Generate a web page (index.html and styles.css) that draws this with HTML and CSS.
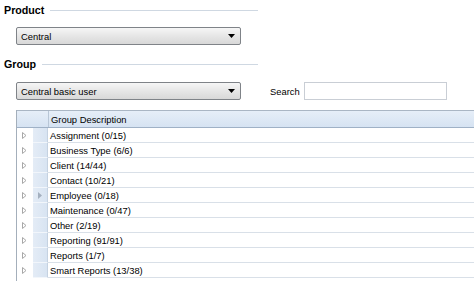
FILE: index.html
```html
<!DOCTYPE html>
<html>
<head>
<meta charset="utf-8">
<link rel="stylesheet" href="styles.css">
</head>
<body>
<div class="page">
  <div class="section-head first">
    <span class="section-label">Product</span>
    <span class="section-line"></span>
  </div>
  <div class="combo">
    <span class="combo-text">Central</span>
    <svg class="combo-arrow" width="7" height="4" viewBox="0 0 7 4"><path d="M0 0H7L3.5 4Z" fill="#000"/></svg>
  </div>

  <div class="section-head">
    <span class="section-label">Group</span>
    <span class="section-line"></span>
  </div>
  <div class="group-row">
    <div class="combo">
      <span class="combo-text">Central basic user</span>
      <svg class="combo-arrow" width="7" height="4" viewBox="0 0 7 4"><path d="M0 0H7L3.5 4Z" fill="#000"/></svg>
    </div>
    <span class="search-label">Search</span>
    <span class="search-box"></span>
  </div>

  <div class="grid">
    <div class="grid-head">
      <span class="gh-left"></span>
      <span class="gh-text">Group Description</span>
    </div>
    <div class="grid-row"><span class="exp"><svg width="5" height="7" viewBox="0 0 5 7"><path d="M0.5 0.5L4 3.5L0.5 6.5Z" fill="none" stroke="#a8a8a8"/></svg></span><span class="sel"></span><span class="cell">Assignment (0/15)</span></div>
    <div class="grid-row"><span class="exp"><svg width="5" height="7" viewBox="0 0 5 7"><path d="M0.5 0.5L4 3.5L0.5 6.5Z" fill="none" stroke="#a8a8a8"/></svg></span><span class="sel"></span><span class="cell">Business Type (6/6)</span></div>
    <div class="grid-row"><span class="exp"><svg width="5" height="7" viewBox="0 0 5 7"><path d="M0.5 0.5L4 3.5L0.5 6.5Z" fill="none" stroke="#a8a8a8"/></svg></span><span class="sel"></span><span class="cell">Client (14/44)</span></div>
    <div class="grid-row"><span class="exp"><svg width="5" height="7" viewBox="0 0 5 7"><path d="M0.5 0.5L4 3.5L0.5 6.5Z" fill="none" stroke="#a8a8a8"/></svg></span><span class="sel"></span><span class="cell">Contact (10/21)</span></div>
    <div class="grid-row"><span class="exp"><svg width="5" height="7" viewBox="0 0 5 7"><path d="M0.5 0.5L4 3.5L0.5 6.5Z" fill="none" stroke="#a8a8a8"/></svg></span><span class="sel"><svg width="4" height="7" viewBox="0 0 4 7"><path d="M0 0L4 3.5L0 7Z" fill="#a4b0bf"/></svg></span><span class="cell">Employee (0/18)</span></div>
    <div class="grid-row"><span class="exp"><svg width="5" height="7" viewBox="0 0 5 7"><path d="M0.5 0.5L4 3.5L0.5 6.5Z" fill="none" stroke="#a8a8a8"/></svg></span><span class="sel"></span><span class="cell">Maintenance (0/47)</span></div>
    <div class="grid-row"><span class="exp"><svg width="5" height="7" viewBox="0 0 5 7"><path d="M0.5 0.5L4 3.5L0.5 6.5Z" fill="none" stroke="#a8a8a8"/></svg></span><span class="sel"></span><span class="cell">Other (2/19)</span></div>
    <div class="grid-row"><span class="exp"><svg width="5" height="7" viewBox="0 0 5 7"><path d="M0.5 0.5L4 3.5L0.5 6.5Z" fill="none" stroke="#a8a8a8"/></svg></span><span class="sel"></span><span class="cell">Reporting (91/91)</span></div>
    <div class="grid-row"><span class="exp"><svg width="5" height="7" viewBox="0 0 5 7"><path d="M0.5 0.5L4 3.5L0.5 6.5Z" fill="none" stroke="#a8a8a8"/></svg></span><span class="sel"></span><span class="cell">Reports (1/7)</span></div>
    <div class="grid-row"><span class="exp"><svg width="5" height="7" viewBox="0 0 5 7"><path d="M0.5 0.5L4 3.5L0.5 6.5Z" fill="none" stroke="#a8a8a8"/></svg></span><span class="sel"></span><span class="cell">Smart Reports (13/38)</span></div>
  </div>
</div>
</body>
</html>
```

FILE: styles.css
```css
html, body {
  margin: 0;
  padding: 0;
  background: #fff;
  height: 100%;
  overflow: hidden;
}
.page {
  font-family: "Liberation Sans", Arial, sans-serif;
  font-size: 9.4px;
  color: #000;
  height: 281px;
  display: flex;
  flex-direction: column;
}
.section-head {
  display: flex;
  align-items: center;
  width: 254px;
  height: 14px;
  padding-left: 4px;
  margin-top: 12px;
}
.section-head.first {
  margin-top: 3px;
}
.section-label {
  font-weight: bold;
  font-size: 10.7px;
  color: #000;
  margin-right: 6px;
}
.section-line {
  flex: 1;
  height: 1px;
  background: #cfd8e2;
}
.combo {
  box-sizing: border-box;
  width: 225px;
  height: 18px;
  margin-left: 16px;
  margin-top: 10px;
  border: 1px solid #7f8388;
  border-radius: 2px;
  background: linear-gradient(#f6f6f6, #e6e6e6 50%, #d8d8d8);
  display: flex;
  align-items: center;
  justify-content: space-between;
  padding: 0 5px 0 4px;
}
.group-row {
  display: flex;
  align-items: center;
  margin-top: 11px;
}
.group-row .combo {
  margin-top: 0;
}
.search-label {
  margin-left: 29px;
}
.search-box {
  box-sizing: border-box;
  width: 143px;
  height: 18px;
  margin-left: 4px;
  border: 1px solid #c9ced5;
  background: #fff;
}
.grid {
  margin-top: 10px;
  margin-left: 16px;
  flex: 1;
  border-left: 1px solid #a4afbb;
}
.grid-head {
  display: flex;
  height: 16px;
  border-top: 1px solid #aab6c4;
  border-bottom: 1px solid #9fb1c6;
  background: linear-gradient(#e6eef8, #d6e3f2);
  align-items: stretch;
}
.gh-left {
  width: 31px;
  border-right: 1px solid #b8c6d6;
}
.gh-text {
  display: flex;
  align-items: center;
  padding-left: 2px;
}
.grid-row {
  display: flex;
  height: 15px;
  align-items: stretch;
}
.exp {
  width: 15px;
  display: flex;
  align-items: center;
  justify-content: center;
  padding-right: 1px;
}
.sel {
  width: 15px;
  background: linear-gradient(90deg, #e4ecf6, #d8e4f2);
  border-right: 1px solid #c5d2e1;
  border-bottom: 1px solid #f2f6fb;
  box-sizing: border-box;
  display: flex;
  align-items: center;
  justify-content: center;
}
.cell {
  flex: 1;
  border-bottom: 1px solid #d9e0e8;
  display: flex;
  align-items: center;
  padding-left: 2px;
}
```
